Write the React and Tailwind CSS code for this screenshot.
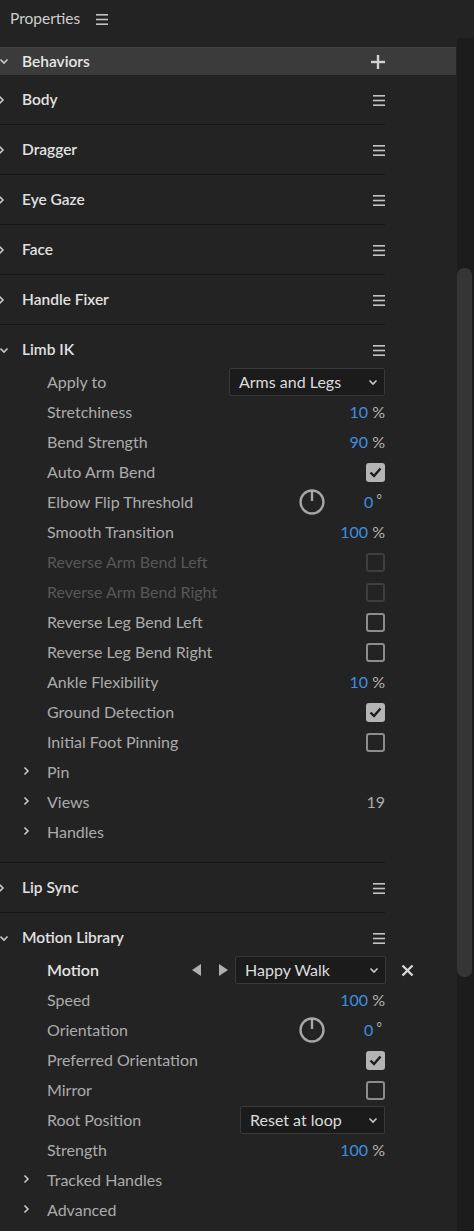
import React from "react";

const Ham = () => (
  <svg width="12" height="11" viewBox="0 0 12 11" className="shrink-0">
    <rect x="0" y="0" width="12" height="1.6" fill="#c4c4c4" />
    <rect x="0" y="4.7" width="12" height="1.6" fill="#c4c4c4" />
    <rect x="0" y="9.4" width="12" height="1.6" fill="#c4c4c4" />
  </svg>
);

const ChevRight = ({ className = "" }) => (
  <svg width="7" height="10" viewBox="0 0 7 10" className={className}>
    <path d="M1.5 1.5 L5 5 L1.5 8.5" stroke="#c8c8c8" strokeWidth="1.6" fill="none" />
  </svg>
);

const ChevDown = ({ color = "#c8c8c8" }) => (
  <svg width="10" height="7" viewBox="0 0 10 7" className="shrink-0">
    <path d="M1.5 1.5 L5 5 L8.5 1.5" stroke={color} strokeWidth="1.6" fill="none" />
  </svg>
);

const Dial = () => (
  <svg width="28" height="28" viewBox="0 0 28 28" className="shrink-0">
    <circle cx="14" cy="14" r="11.5" stroke="#a6a6a6" strokeWidth="2.4" fill="none" />
    <line x1="14" y1="3" x2="14" y2="13" stroke="#a6a6a6" strokeWidth="2.4" />
  </svg>
);

const Check = ({ checked, disabled }) => {
  if (checked)
    return (
      <div className="w-[19px] h-[19px] rounded-[3px] bg-[#b4b4b4] flex items-center justify-center shrink-0">
        <svg width="13" height="11" viewBox="0 0 13 11">
          <path d="M1.5 5.5 L5 9 L11.5 1.5" stroke="#1e1e1e" strokeWidth="2.4" fill="none" />
        </svg>
      </div>
    );
  return (
    <div
      className={
        "w-[19px] h-[19px] rounded-[3px] border-2 shrink-0 " +
        (disabled ? "border-[#3e3e3e]" : "border-[#8c8c8c]")
      }
    />
  );
};

const Pct = ({ v, unit = "%" }) => (
  <span className="ml-auto text-[16px] whitespace-pre">
    <span className="text-[#3f8ee0]">{v}</span>
    <span className="text-[#b4b4b4]"> {unit}</span>
  </span>
);

const Deg = ({ v }) => (
  <span className="ml-auto flex items-center">
    <Dial />
    <span className="w-[59px] text-right pr-[3px] text-[16px] whitespace-pre">
      <span className="text-[#3f8ee0]">{v}</span>
      <span className="text-[#b4b4b4] text-[13px] align-top"> °</span>
    </span>
  </span>
);

const Drop = ({ label, w }) => (
  <div
    className={
      "ml-auto h-[28px] rounded-[2px] border border-[#383838] bg-[#1b1b1b] flex items-center pl-[9px] pr-[6px] " + w
    }
  >
    <span className="text-[#dcdcdc] text-[16px] flex-1">{label}</span>
    <ChevDown />
  </div>
);

const Row = ({ label, children, disabled, bright, className = "" }) => (
  <div className={"flex items-center h-[30px] pl-[47px] " + (className || "w-[385px]")}>
    <span
      className={
        "text-[16px] whitespace-nowrap " +
        (disabled ? "text-[#575757]" : bright ? "text-[#e2e2e2] font-semibold" : "text-[#ababab]")
      }
    >
      {label}
    </span>
    {children}
  </div>
);

const SubRow = ({ label, right }) => (
  <div className="flex items-center h-[30px] w-[385px] relative">
    <ChevRight className="absolute left-[23px] top-[9px]" />
    <span className="pl-[47px] text-[16px] text-[#ababab]">{label}</span>
    {right && <span className="ml-auto text-[16px] text-[#ababab]">{right}</span>}
  </div>
);

const SectionTitle = ({ label, open }) => (
  <div className="flex items-center h-[34px] relative">
    {open ? (
      <div className="absolute left-[-1px] top-[14px]">
        <ChevDown />
      </div>
    ) : (
      <ChevRight className="absolute left-[-2px] top-[12px]" />
    )}
    <span className="pl-[22px] text-[15.5px] text-[#e0e0e0] font-semibold">{label}</span>
    <span className="ml-auto">
      <Ham />
    </span>
  </div>
);

const Collapsed = ({ label }) => (
  <div className="w-[385px] pt-[8px] pb-[7px] border-b border-[#161616]">
    <SectionTitle label={label} />
  </div>
);

export default function App() {
  return (
    <div
      className="w-[474px] h-[1231px] bg-[#232323] overflow-hidden flex flex-col"
      style={{ fontFamily: "Lato, 'Open Sans', sans-serif" }}
    >
      <div className="h-[38px] flex items-center pl-[10px] gap-[16px] shrink-0">
        <span className="text-[15.5px] text-[#cfcfcf]">Properties</span>
        <Ham />
      </div>
      <div className="flex flex-1 min-h-0">
        <div className="w-[457px] pt-[9px] overflow-hidden">
          <div className="h-[28px] w-[456px] bg-[#3b3b3b] border-t border-[#454545]">
            <div className="w-[385px] h-full flex items-center relative">
              <div className="absolute left-[-1px] top-[10px]">
                <ChevDown />
              </div>
              <span className="pl-[22px] text-[15.5px] text-[#e6e6e6] font-semibold">Behaviors</span>
              <svg width="14" height="14" viewBox="0 0 14 14" className="ml-auto">
                <rect x="0" y="5.8" width="14" height="2.4" fill="#d2d2d2" />
                <rect x="5.8" y="0" width="2.4" height="14" fill="#d2d2d2" />
              </svg>
            </div>
          </div>

          <Collapsed label="Body" />
          <Collapsed label="Dragger" />
          <Collapsed label="Eye Gaze" />
          <Collapsed label="Face" />
          <Collapsed label="Handle Fixer" />

          <div className="w-[385px] pt-[8px] pb-[15px] border-b border-[#161616]">
            <SectionTitle label="Limb IK" open />
            <Row label="Apply to">
              <Drop label="Arms and Legs" w="w-[156px]" />
            </Row>
            <Row label="Stretchiness">
              <Pct v="10" />
            </Row>
            <Row label="Bend Strength">
              <Pct v="90" />
            </Row>
            <Row label="Auto Arm Bend">
              <span className="ml-auto" />
              <Check checked />
            </Row>
            <Row label="Elbow Flip Threshold">
              <Deg v="0" />
            </Row>
            <Row label="Smooth Transition">
              <Pct v="100" />
            </Row>
            <Row label="Reverse Arm Bend Left" disabled>
              <span className="ml-auto" />
              <Check disabled />
            </Row>
            <Row label="Reverse Arm Bend Right" disabled>
              <span className="ml-auto" />
              <Check disabled />
            </Row>
            <Row label="Reverse Leg Bend Left">
              <span className="ml-auto" />
              <Check />
            </Row>
            <Row label="Reverse Leg Bend Right">
              <span className="ml-auto" />
              <Check />
            </Row>
            <Row label="Ankle Flexibility">
              <Pct v="10" />
            </Row>
            <Row label="Ground Detection">
              <span className="ml-auto" />
              <Check checked />
            </Row>
            <Row label="Initial Foot Pinning">
              <span className="ml-auto" />
              <Check />
            </Row>
            <SubRow label="Pin" />
            <SubRow label="Views" right="19" />
            <SubRow label="Handles" />
          </div>

          <Collapsed label="Lip Sync" />

          <div className="w-[385px] pt-[8px]">
            <SectionTitle label="Motion Library" open />
            <Row label="Motion" bright className="w-[414px]">
              <div className="ml-auto flex items-center">
                <svg width="9" height="12" viewBox="0 0 9 12">
                  <path d="M9 0 L0 6 L9 12 Z" fill="#b0b0b0" />
                </svg>
                <svg width="9" height="12" viewBox="0 0 9 12" className="ml-[18px] mr-[7px]">
                  <path d="M0 0 L9 6 L0 12 Z" fill="#b0b0b0" />
                </svg>
              </div>
              <div className="h-[28px] w-[151px] rounded-[2px] border border-[#383838] bg-[#1b1b1b] flex items-center pl-[9px] pr-[6px]">
                <span className="text-[#dcdcdc] text-[16px] flex-1">Happy Walk</span>
                <ChevDown />
              </div>
              <svg width="13" height="13" viewBox="0 0 13 13" className="ml-[15px]">
                <path d="M1.5 1.5 L11.5 11.5 M11.5 1.5 L1.5 11.5" stroke="#d6d6d6" strokeWidth="2.4" />
              </svg>
            </Row>
            <Row label="Speed">
              <Pct v="100" />
            </Row>
            <Row label="Orientation">
              <Deg v="0" />
            </Row>
            <Row label="Preferred Orientation">
              <span className="ml-auto" />
              <Check checked />
            </Row>
            <Row label="Mirror">
              <span className="ml-auto" />
              <Check />
            </Row>
            <Row label="Root Position">
              <Drop label="Reset at loop" w="w-[145px]" />
            </Row>
            <Row label="Strength">
              <Pct v="100" />
            </Row>
            <SubRow label="Tracked Handles" />
            <SubRow label="Advanced" />
          </div>
        </div>
        <div className="w-[17px] bg-[#1c1c1c] relative">
          <div className="absolute left-0 w-[15px] top-[230px] h-[709px] rounded-[7px] bg-[#353535]" />
        </div>
      </div>
    </div>
  );
}
